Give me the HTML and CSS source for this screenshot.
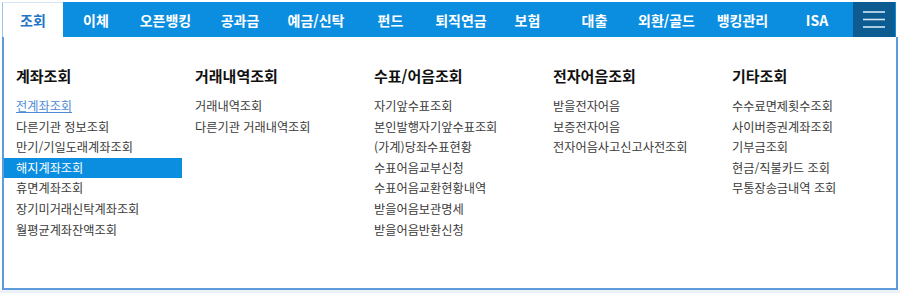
FILE: index.html
```html
<!DOCTYPE html>
<html lang="ko">
<head>
<meta charset="utf-8">
<link rel="stylesheet" href="styles.css">
</head>
<body>
<div class="wrap">
  <nav class="gnb">
    <a class="tab active">조회</a>
    <a class="tab">이체</a>
    <a class="tab">오픈뱅킹</a>
    <a class="tab">공과금</a>
    <a class="tab">예금/신탁</a>
    <a class="tab">펀드</a>
    <a class="tab">퇴직연금</a>
    <a class="tab">보험</a>
    <a class="tab">대출</a>
    <a class="tab">외환/골드</a>
    <a class="tab">뱅킹관리</a>
    <a class="tab">ISA</a>
    <a class="menu-btn" aria-label="전체메뉴">
      <svg width="22" height="17" viewBox="0 0 22 17"><g stroke="#d3e6f5" stroke-width="1.6"><line x1="0" y1="1" x2="22" y2="1"/><line x1="0" y1="8.5" x2="22" y2="8.5"/><line x1="0" y1="16" x2="22" y2="16"/></g></svg>
    </a>
  </nav>
  <div class="panel">
    <div class="col">
      <h3>계좌조회</h3>
      <ul>
        <li><a class="visited">전계좌조회</a></li>
        <li><a>다른기관 정보조회</a></li>
        <li><a>만기/기일도래계좌조회</a></li>
        <li class="on"><a>해지계좌조회</a></li>
        <li><a>휴면계좌조회</a></li>
        <li><a>장기미거래신탁계좌조회</a></li>
        <li><a>월평균계좌잔액조회</a></li>
      </ul>
    </div>
    <div class="col">
      <h3>거래내역조회</h3>
      <ul>
        <li><a>거래내역조회</a></li>
        <li><a>다른기관 거래내역조회</a></li>
      </ul>
    </div>
    <div class="col">
      <h3>수표/어음조회</h3>
      <ul>
        <li><a>자기앞수표조회</a></li>
        <li><a>본인발행자기앞수표조회</a></li>
        <li><a>(가계)당좌수표현황</a></li>
        <li><a>수표어음교부신청</a></li>
        <li><a>수표어음교환현황내역</a></li>
        <li><a>받을어음보관명세</a></li>
        <li><a>받을어음반환신청</a></li>
      </ul>
    </div>
    <div class="col">
      <h3>전자어음조회</h3>
      <ul>
        <li><a>받을전자어음</a></li>
        <li><a>보증전자어음</a></li>
        <li><a>전자어음사고신고사전조회</a></li>
      </ul>
    </div>
    <div class="col">
      <h3>기타조회</h3>
      <ul>
        <li><a>수수료면제횟수조회</a></li>
        <li><a>사이버증권계좌조회</a></li>
        <li><a>기부금조회</a></li>
        <li><a>현금/직불카드 조회</a></li>
        <li><a>무통장송금내역 조회</a></li>
      </ul>
    </div>
  </div>
  <div class="below"></div>
</div>
</body>
</html>
```

FILE: styles.css
```css
* { box-sizing: border-box; }
html, body { margin: 0; padding: 0; background: #ffffff; }
body {
  font-family: "Noto Sans CJK KR", "Noto Sans", sans-serif;
  color: #333;
  overflow: hidden;
}
.wrap {
  margin: 2px 0 0 2px;
  width: 896px;
}
.gnb {
  display: grid;
  grid-template-columns: 61px 66px 73px 76px 76px 73px 68px 65px 69px 75px 77px 72px 42px;
  height: 35px;
  background: #0b8ee0;
  width: 894px;
}
.tab {
  display: flex;
  align-items: center;
  justify-content: center;
  color: #fff;
  font-weight: 700;
  font-size: 14px;
  text-decoration: none;
  white-space: nowrap;
}
.tab.active {
  background: #fff;
  color: #1f74c6;
  border-left: 1px solid #9cc3ea;
  border-top: 1px solid #d6e6f6;
}
.menu-btn {
  display: flex;
  align-items: center;
  justify-content: center;
  background: #0c5c92;
}
.panel {
  display: grid;
  grid-template-columns: 179px 179px 179px 179px 1fr;
  height: 253px;
  border: 2px solid #5e9bdc;
  border-top: 0;
  padding-top: 28px;
}
.col h3 {
  margin: 0 0 10px 0;
  padding-left: 12px;
  font-size: 15px;
  line-height: 21px;
  font-weight: 700;
  color: #111;
}
.col ul {
  list-style: none;
  margin: 0;
  padding: 0;
}
.col li {
  height: 20.6px;
  line-height: 20.6px;
  padding-left: 12px;
  margin-right: 1px;
  font-size: 12.2px;
  white-space: nowrap;
}
.col li a { color: #3a3a3a; text-decoration: none; }
.col li a.visited { color: #4d8bd6; text-decoration: underline; }
.col li.on { background: #0b8ee0; }
.col li.on a { color: #fff; }
.below {
  height: 10px;
  background: #eef2f7;
  margin-left: -2px;
  width: 900px;
}
```
